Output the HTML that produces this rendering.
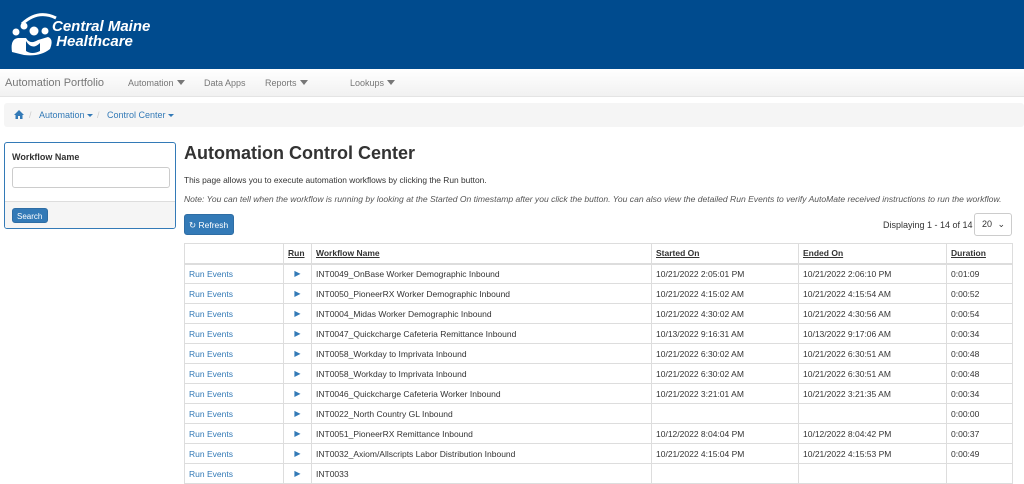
<!DOCTYPE html>
<html><head><style>
*{box-sizing:border-box;margin:0;padding:0}
body{width:1024px;height:467px;overflow:hidden;background:#fff;font-family:"Liberation Sans",Arial,sans-serif;font-size:9px;color:#333;position:relative}
.hdr{position:absolute;left:0;top:0;width:1024px;height:69px;background:#004b8e}
.logo{position:absolute;left:52px;top:19px;color:#fff;font-weight:bold;font-style:italic;font-size:15px;line-height:15px}
.nav{position:absolute;left:0;top:69px;width:1024px;height:28px;background:linear-gradient(#fff,#f1f1f1);border-bottom:1px solid #e4e4e4}
.nav span{position:absolute;top:9px;color:#777;font-size:9px}
.caret{display:inline-block;border-left:4px solid transparent;border-right:4px solid transparent;border-top:5px solid #777;margin-left:3px;vertical-align:1px}
.bc{position:absolute;left:4px;top:103px;width:1020px;height:24px;background:#f5f5f5;border-radius:3px}
.bc span{position:absolute;top:7px;font-size:9px;color:#337ab7}
.bc .sl{color:#ccc}
.cb{border-top-color:#337ab7;border-left-width:3px;border-right-width:3px;border-top-width:3px;margin-left:2px}
.panel{position:absolute;left:4px;top:142px;width:172px;height:87px;border:1px solid #337ab7;border-radius:3px;overflow:hidden}
.panel b{position:absolute;left:7px;top:9px;font-size:9px}
.panel .in{position:absolute;left:7px;top:24px;width:158px;height:21px;border:1px solid #ccc;border-radius:3px}
.panel .ft{position:absolute;left:0;top:58px;width:100%;height:29px;background:#f5f5f5;border-top:1px solid #ddd}
.btn{position:absolute;color:#fff;background:#337ab7;border:1px solid #2e6da4;border-radius:3px}
h1{position:absolute;left:184px;top:143px;font-size:18px;font-weight:bold;color:#333}
.p1{position:absolute;left:184px;top:175px;font-size:8.4px}
.p2{position:absolute;left:184px;top:194px;font-size:8.55px;font-style:italic;color:#555;white-space:nowrap}
.disp{position:absolute;left:883px;top:220px;font-size:9px}
.sel{position:absolute;left:974px;top:213px;width:38px;height:23px;border:1px solid #ccc;border-radius:3px;padding:5px 0 0 7px;font-size:9px}
table{position:absolute;left:184px;top:243px;width:829px;border-collapse:collapse}
td,th{border:1px solid #ddd;height:20px;padding:0 4px;font-size:8.5px;text-align:left;white-space:nowrap}
th{text-decoration:underline;font-weight:bold;border-bottom:2px solid #ddd}
td.a{color:#337ab7}
td.r{color:#337ab7;text-align:center;font-size:8px}
</style></head><body>
<div class="hdr">
<svg style="position:absolute;left:10px;top:12px" width="48" height="44" viewBox="0 0 48 44"><path d="M12 12 Q28 -3 46 6" stroke="#fff" stroke-width="3" fill="none"/><circle cx="6" cy="20" r="3.5" fill="#fff"/><circle cx="14" cy="14" r="3.5" fill="#fff"/><circle cx="24" cy="19" r="4.5" fill="#fff"/><circle cx="35" cy="19" r="3.5" fill="#fff"/><path d="M2 40 Q0 27 8 26 L16 26 Q20 33 28 28 L38 25 Q44 27 40 37 Q30 45 14 43 Z" fill="#fff"/><path d="M16 29 Q22 39 30 31 L30 39 Q22 43 16 39Z" fill="#004b8e"/></svg>
<div class="logo">Central Maine<br>&nbsp;Healthcare</div>
</div>
<div class="nav">
<span style="left:5px;top:8px;font-size:11px">Automation Portfolio</span>
<span style="left:128px">Automation<i class="caret"></i></span>
<span style="left:204px">Data Apps</span>
<span style="left:265px">Reports<i class="caret"></i></span>
<span style="left:350px">Lookups<i class="caret"></i></span>
</div>
<div class="bc">
<svg style="position:absolute;left:10px;top:7px" width="10" height="9" viewBox="0 0 10 9"><path d="M5 0 L10 5 L8.5 5 L8.5 9 L6 9 L6 6 L4 6 L4 9 L1.5 9 L1.5 5 L0 5Z" fill="#337ab7"/></svg>
<span class="sl" style="left:25px">/</span>
<span style="left:35px">Automation<i class="caret cb"></i></span>
<span class="sl" style="left:93px">/</span>
<span style="left:103px">Control Center<i class="caret cb"></i></span>
</div>
<div class="panel"><b>Workflow Name</b><div class="in"></div><div class="ft"><div class="btn" style="left:7px;top:6px;width:36px;height:15px;font-size:8px;padding:3px 0 0 4px">Search</div></div></div>
<h1>Automation Control Center</h1>
<div class="p1">This page allows you to execute automation workflows by clicking the Run button.</div>
<div class="p2">Note: You can tell when the workflow is running by looking at the Started On timestamp after you click the button. You can also view the detailed Run Events to verify AutoMate received instructions to run the workflow.</div>
<div class="btn" style="left:184px;top:214px;width:50px;height:21px;font-size:8.5px;padding:5px 0 0 4px">&#x21bb; Refresh</div>
<div class="disp">Displaying 1 - 14 of 14</div>
<div class="sel">20 <span style="position:absolute;right:6px;top:5px">&#8964;</span></div>
<table>
<tr><th style="width:99px"></th><th style="width:28px">Run</th><th style="width:340px">Workflow Name</th><th style="width:147px">Started On</th><th style="width:148px">Ended On</th><th>Duration</th></tr>
<tr><td class="a">Run Events</td><td class="r">&#9654;</td><td>INT0049_OnBase Worker Demographic Inbound</td><td>10/21/2022 2:05:01 PM</td><td>10/21/2022 2:06:10 PM</td><td>0:01:09</td></tr>
<tr><td class="a">Run Events</td><td class="r">&#9654;</td><td>INT0050_PioneerRX Worker Demographic Inbound</td><td>10/21/2022 4:15:02 AM</td><td>10/21/2022 4:15:54 AM</td><td>0:00:52</td></tr>
<tr><td class="a">Run Events</td><td class="r">&#9654;</td><td>INT0004_Midas Worker Demographic Inbound</td><td>10/21/2022 4:30:02 AM</td><td>10/21/2022 4:30:56 AM</td><td>0:00:54</td></tr>
<tr><td class="a">Run Events</td><td class="r">&#9654;</td><td>INT0047_Quickcharge Cafeteria Remittance Inbound</td><td>10/13/2022 9:16:31 AM</td><td>10/13/2022 9:17:06 AM</td><td>0:00:34</td></tr>
<tr><td class="a">Run Events</td><td class="r">&#9654;</td><td>INT0058_Workday to Imprivata Inbound</td><td>10/21/2022 6:30:02 AM</td><td>10/21/2022 6:30:51 AM</td><td>0:00:48</td></tr>
<tr><td class="a">Run Events</td><td class="r">&#9654;</td><td>INT0058_Workday to Imprivata Inbound</td><td>10/21/2022 6:30:02 AM</td><td>10/21/2022 6:30:51 AM</td><td>0:00:48</td></tr>
<tr><td class="a">Run Events</td><td class="r">&#9654;</td><td>INT0046_Quickcharge Cafeteria Worker Inbound</td><td>10/21/2022 3:21:01 AM</td><td>10/21/2022 3:21:35 AM</td><td>0:00:34</td></tr>
<tr><td class="a">Run Events</td><td class="r">&#9654;</td><td>INT0022_North Country GL Inbound</td><td></td><td></td><td>0:00:00</td></tr>
<tr><td class="a">Run Events</td><td class="r">&#9654;</td><td>INT0051_PioneerRX Remittance Inbound</td><td>10/12/2022 8:04:04 PM</td><td>10/12/2022 8:04:42 PM</td><td>0:00:37</td></tr>
<tr><td class="a">Run Events</td><td class="r">&#9654;</td><td>INT0032_Axiom/Allscripts Labor Distribution Inbound</td><td>10/21/2022 4:15:04 PM</td><td>10/21/2022 4:15:53 PM</td><td>0:00:49</td></tr>
<tr><td class="a">Run Events</td><td class="r">&#9654;</td><td>INT0033</td><td></td><td></td><td></td></tr>
</table>
</body></html>
